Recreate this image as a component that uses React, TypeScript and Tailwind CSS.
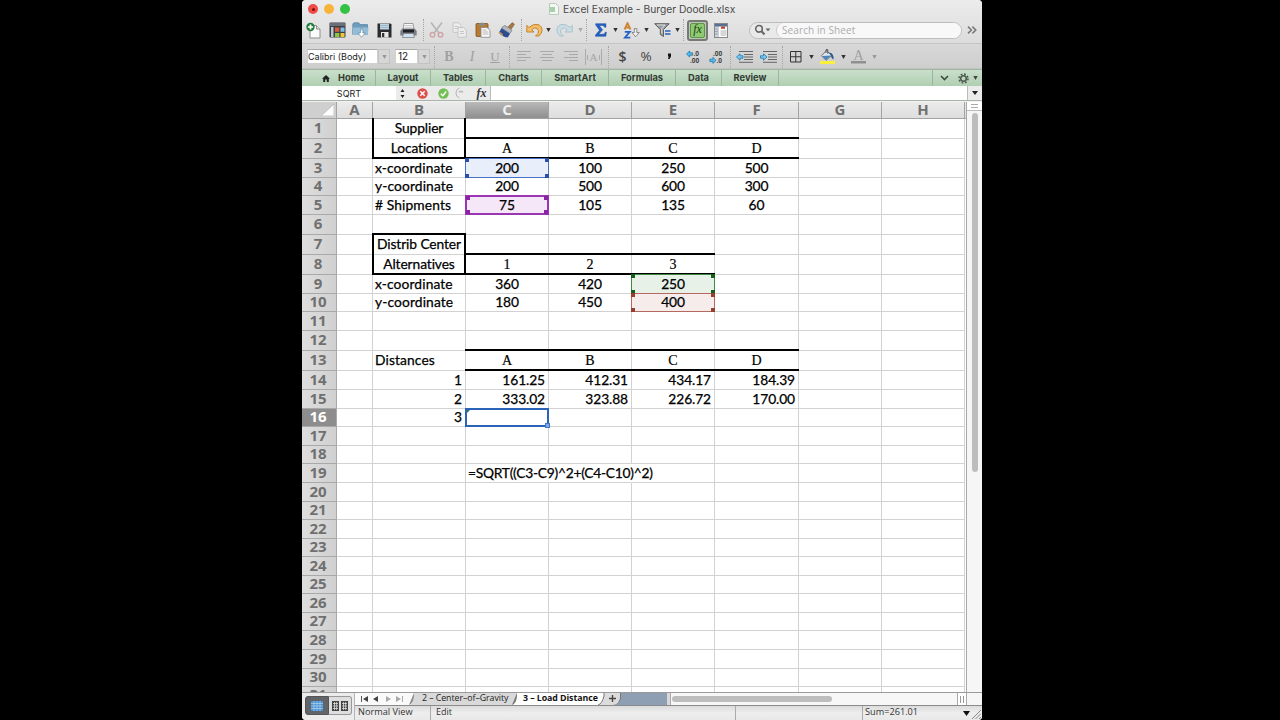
import type { ReactNode } from "react";

const ROWS = [20, 20, 19, 18, 19, 20, 20, 20, 19, 18, 19, 20, 20, 19, 19, 18, 19, 18, 19, 19, 18, 19, 18, 19, 18, 19, 18, 19, 19, 18, 6];
const COLS = ["A", "B", "C", "D", "E", "F", "G", "H"];
const COL_W = ["w-[36px]", "w-[93px]", "w-[83px]", "w-[83px]", "w-[83px]", "w-[84px]", "w-[83px]", "w-[83px]"];

const VALUES: Record<string, string> = {
  B1: "Supplier", B2: "Locations", C2: "A", D2: "B", E2: "C", F2: "D",
  B3: "x-coordinate", C3: "200", D3: "100", E3: "250", F3: "500",
  B4: "y-coordinate", C4: "200", D4: "500", E4: "600", F4: "300",
  B5: "# Shipments", C5: "75", D5: "105", E5: "135", F5: "60",
  B7: "Distrib Center", B8: "Alternatives", C8: "1", D8: "2", E8: "3",
  B9: "x-coordinate", C9: "360", D9: "420", E9: "250",
  B10: "y-coordinate", C10: "180", D10: "450", E10: "400",
  B13: "Distances", C13: "A", D13: "B", E13: "C", F13: "D",
  B14: "1", C14: "161.25", D14: "412.31", E14: "434.17", F14: "184.39",
  B15: "2", C15: "333.02", D15: "323.88", E15: "226.72", F15: "170.00",
  B16: "3", C19: "=SQRT((C3-C9)^2+(C4-C10)^2)",
};

const LINED = new Set(
  "B2 C1 D1 E1 F1 C2 D2 E2 F2 B6 B8 C7 D7 E7 C8 D8 E8 C12 D12 E12 F12 C13 D13 E13 F13".split(" "),
);
const BOXED = new Set(["B1", "B2", "B7", "B8"]);

const MARKS: Record<string, { box: string; dot: string }> = {
  C3: { box: "border-[#4a72c4] bg-[#e8effa]", dot: "bg-[#2b4fae]" },
  C5: { box: "border-2 border-[#9a35b4] bg-[#f5e6f8]", dot: "bg-[#8a22a8]" },
  E9: { box: "border-[#3f8a43] bg-[#e7f1e8]", dot: "bg-[#155f1c]" },
  E10: { box: "border-[#b5695c] bg-[#f5eceb]", dot: "bg-[#963f30]" },
};

function Cell({ col, row }: { col: number; row: number }) {
  const id = COLS[col] + row;
  const text = VALUES[id];
  const mark = MARKS[id];
  const serif = (row === 2 || row === 8 || row === 13) && col > 1;
  const left = (col === 1 && [3, 4, 5, 9, 10, 13].includes(row)) || row === 19;
  const right = row >= 14 && row <= 16;
  const spill = row === 19 && (col === 2 || col === 3);
  return (
    <div
      className={`relative flex h-full shrink-0 items-center whitespace-nowrap border-b border-r border-b-[#d2d2d2] font-normal ${spill ? "border-r-transparent" : "border-r-[#d2d2d2]"} ${COL_W[col]} ${left ? "justify-start pl-[2px]" : right ? "justify-end pr-[3px]" : "justify-center"}`}
    >
      {mark && (
        <div className={`absolute -left-px -right-px -top-px bottom-[-1px] border ${mark.box}`}>
          <i className={`absolute -left-[1px] -top-[1px] size-1 ${mark.dot}`} />
          <i className={`absolute -right-[1px] -top-[1px] size-1 ${mark.dot}`} />
          <i className={`absolute -bottom-[1px] -left-[1px] size-1 ${mark.dot}`} />
          <i className={`absolute -bottom-[1px] -right-[1px] size-1 ${mark.dot}`} />
        </div>
      )}
      {LINED.has(id) && <i className="absolute -bottom-px -left-px -right-px h-[2px] bg-black" />}
      {BOXED.has(id) && <i className="absolute -bottom-px -left-px -top-px w-[2px] bg-black" />}
      {BOXED.has(id) && <i className="absolute -bottom-px -right-px -top-px w-[2px] bg-black" />}
      {id === "C16" && (
        <div className="absolute -bottom-px -left-px -right-px -top-px z-10 border-2 border-[#2a63b8] bg-white">
          <svg className="absolute left-0 top-0" width="3" height="3"><path d="M0 0h3L0 3z" fill="#2e7a62" /></svg>
          <i className="absolute -bottom-[3px] -right-[3px] size-[5px] border border-[#3f77c9] bg-[#7ea9e6]" />
        </div>
      )}
      {text && (
        <span
          className={
            serif
              ? "relative font-['Liberation_Serif',serif] text-[14px] leading-[17px] text-black [-webkit-text-stroke:0.2px_black]"
              : row === 19
                ? "relative -top-px font-['Lato',sans-serif] text-[13.8px] leading-[17px] tracking-[-0.26px] text-black [-webkit-text-stroke:0.25px_black]"
                : left
                  ? "relative -top-px font-['Lato',sans-serif] text-[13.8px] leading-[17px] tracking-[0.12px] text-black [-webkit-text-stroke:0.25px_black]"
                  : "relative -top-px font-['Lato',sans-serif] text-[13.8px] leading-[17px] tracking-[-0.1px] text-black [-webkit-text-stroke:0.25px_black]"
          }
        >
          {text}
        </span>
      )}
    </div>
  );
}

function S({ w, children }: { w: string; children?: ReactNode }) {
  return <div className={`flex h-full shrink-0 items-center justify-center ${w}`}>{children}</div>;
}
function Sep({ w }: { w: string }) {
  return <S w={w}><i className="h-[22px] border-l border-dotted border-[#a5a5a5]" /></S>;
}
function Arr({ w, c = "fill-[#333]" }: { w: string; c?: string }) {
  return <S w={w}><svg width="5" height="4" className={c}><path d="M0.3 0h4.4L2.5 4z" /></svg></S>;
}
function Lines({ kind }: { kind: "l" | "c" | "r" }) {
  const x = kind === "l" ? 0 : kind === "c" ? 2 : 5;
  return (
    <svg width="14" height="12" className="stroke-[#a9a9a9]" strokeWidth="1">
      <path d={`M0 .5h14M${x} 3.5h${kind === "c" ? 10 : 9}M0 6.5h14M${x} 9.5h${kind === "c" ? 10 : 9}`} />
    </svg>
  );
}
function Indent({ flip }: { flip?: boolean }) {
  return (
    <svg width="17" height="12">
      <path d="M3 .5h14M8 3.500h9M8 6h9M8 8.500h9M3 11.300h14" stroke="#666" fill="none" />
      <path d={flip ? "M7 6L3.500 2.800v2H.5v2.400h3v2z" : "M.5 6L4 2.800v2h3v2.400H4v2z"} fill="#7cc8f0" stroke="#1879b4" strokeWidth=".8" />
    </svg>
  );
}
function Decimals({ inc }: { inc?: boolean }) {
  return (
    <svg width="15" height="14" className="font-['Open_Sans',sans-serif] text-[6.500px] font-bold" fill="#444">
      <text x={inc ? 7.500 : 4} y="6">{inc ? ".0" : ".00"}</text>
      <text x={inc ? 4 : 7.500} y="13">{inc ? ".00" : ".0"}</text>
      {inc ? (
        <path d="M.5 4L3.600 1v1.800h3v2.400h-3V7z" fill="#5dbbea" stroke="#1879b4" strokeWidth=".8" />
      ) : (
        <path d="M7 10.400L3.900 7.400v1.800h-3v2.400h3v1.800z" fill="#5dbbea" stroke="#1879b4" strokeWidth=".8" />
      )}
    </svg>
  );
}

function Toolbar() {
  return (
    <div className="flex h-[25px] shrink-0 items-center pb-px">
      <S w="w-[24px]">
        <svg width="16" height="17">
          <path d="M4 3.500h6.500l3.500 3.600V16H4z" fill="#fbfbfb" stroke="#8f8f8f" />
          <path d="M10.500 3.500v3.600h3.500" fill="#ddd" stroke="#8f8f8f" />
          <circle cx="4.500" cy="5" r="4.200" fill="#1e7a34" />
          <path d="M4.500 2.400v5.200M1.900 5h5.200" stroke="#fff" strokeWidth="1.700" />
        </svg>
      </S>
      <S w="w-[23px]">
        <svg width="17" height="16">
          <rect x=".5" y=".5" width="16" height="15" rx="1" fill="#3b3f45" />
          <rect x="1" y="1" width="15" height="3" fill="#6a7079" />
          <path d="M2 5h2.500v10H2z" fill="#b9c6d4" />
          <rect x="6" y="5.500" width="4.300" height="4.300" fill="#db5b35" /><rect x="11.500" y="5.500" width="4" height="4.300" fill="#7fbde8" />
          <rect x="6" y="11" width="4.300" height="4" fill="#8cc63f" /><rect x="11.500" y="11" width="4" height="4" fill="#f0c33c" />
        </svg>
      </S>
      <S w="w-[23px]">
        <svg width="17" height="16">
          <path d="M.8 12.500V2l1-1.200h5l1.200 1.800h7.500v10z" fill="#6d9cbd" stroke="#4f7f9f" strokeWidth=".7" />
          <path d="M1 5.500h15.500l-.6 7.500H1z" fill="#94bcd6" />
          <path d="M8.800 6.500c2.200.5 2.300 2.500 2 4.500h2.400l-3.700 4.300L6 11h2.300c.4-2 .8-3 .5-4.500z" fill="#fff" stroke="#5b7f96" strokeWidth=".6" />
        </svg>
      </S>
      <S w="w-[24px]">
        <svg width="15" height="15">
          <path d="M.5.5h13l1 1v13H.5z" fill="#2a2c30" />
          <path d="M3 .8h9v5.700H3z" fill="#c2d5e4" /><path d="M3 2.500h9M3 4.500h9" stroke="#8fa9bd" strokeWidth=".7" />
          <path d="M4 9h7.500v5.500H4z" fill="#e7e7e7" /><path d="M5 10h2.300v4H5z" fill="#333" />
        </svg>
      </S>
      <S w="w-[24px]">
        <svg width="17" height="15">
          <path d="M4 .5h9l1 6H3z" fill="#fafafa" stroke="#888" strokeWidth=".8" /><path d="M4.500 2.500h8M4.500 4.300h8" stroke="#aaa" strokeWidth=".6" />
          <path d="M2.300 5.500h12.400l2 2.500v4.500H.3V8z" fill="#7b7f84" /><path d="M3 6.500h11v3H3z" fill="#1e2226" />
          <path d="M3.500 10.500h10l1 4H2.500z" fill="#cfe2ef" stroke="#777" strokeWidth=".7" />
        </svg>
      </S>
      <Sep w="w-[6px]" />
      <S w="w-[21px]">
        <svg width="15" height="16" fill="none" stroke="#b4b4b4" strokeWidth="1.500">
          <path d="M2 .5l7.500 10M13 .5L5.500 10.500" />
          <circle cx="3.500" cy="12.700" r="2.300" stroke="#cfa5a8" /><circle cx="11.500" cy="12.700" r="2.300" stroke="#cfa5a8" />
        </svg>
      </S>
      <S w="w-[24px]">
        <svg width="15" height="16" fill="#ededed" stroke="#c2c2c2" strokeWidth=".9">
          <path d="M1 .8h5.500l2.500 2.500v7H1z" /><path d="M6 5.500h5.500L14.300 8v7.200H6z" /><path d="M2.500 4.500h4M2.500 6.500h4M8 9.500h4M8 11.500h4" />
        </svg>
      </S>
      <S w="w-[23px]">
        <svg width="16" height="16">
          <rect x="1" y="1.500" width="12" height="13" rx="1" fill="#b87a33" stroke="#7d501d" strokeWidth=".8" />
          <path d="M4 1.500h1.500q1.500-2 3 0H10v2.300H4z" fill="#888d92" />
          <path d="M6 5.500h6l3 2.800v7H6z" fill="#fafafa" stroke="#888" strokeWidth=".8" />
          <path d="M7.500 8h4M7.500 10h6M7.500 12h6" stroke="#999" strokeWidth=".7" />
        </svg>
      </S>
      <S w="w-[24px]">
        <svg width="17" height="16">
          <path d="M9.500 5.500L14 .8q2 0 2.300 1.800L12.500 8z" fill="#a87640" stroke="#6e4a22" strokeWidth=".5" />
          <path d="M6.500 3.500q4.500 1.500 7.500 5l-2.200 3L3.500 6z" fill="#b4b9c0" stroke="#666" strokeWidth=".6" />
          <path d="M3.500 6.200l8.500 5.500-2.300 3.800Q4 15 .8 10.800z" fill="#2b4b94" /><path d="M.8 10.600q2.800 0 3.800 3.200" fill="none" stroke="#d8a14c" strokeWidth="1.200" />
        </svg>
      </S>
      <Sep w="w-[6px]" />
      <S w="w-[20px]">
        <svg width="17" height="14"><path d="M.8 2.300L2.900 4.500Q7.500.2 12 1.600q4.300 1.600 4 6-.3 3-3 5.400h-3.500q3.500-2.400 3-5.200-.6-3.300-4-2.800-1.500.3-2.700 1.800L8 9H.8z" fill="#f4bd68" stroke="#c07a22" strokeWidth=".9" /></svg>
      </S>
      <Arr w="w-[8px]" />
      <S w="w-[25px]">
        <svg width="17" height="14"><path d="M16.200 2.300l-2.100 2.200Q9.500.2 5 1.600.7 3.200 1 7.600q.3 3 3 5.400h3.500Q4 10.600 4.500 7.800q.6-3.300 4-2.800 1.500.3 2.700 1.800L9 9h7.200z" fill="#cbdde5" stroke="#a5bfcb" strokeWidth=".9" /></svg>
      </S>
      <Arr w="w-[6px]" c="fill-[#aaa]" />
      <Sep w="w-[7px]" />
      <S w="w-[22px]">
        <svg width="12" height="14"><path d="M.7.7h10.200v3.500H9.500Q9.300 2.500 7.700 2.500H4.200L7.600 6.800 3.700 11.300h4.500q1.600 0 2-2h1.200L10.800 13.300H.5v-1.200L4.500 7.300.7 2z" fill="#2460c5" stroke="#17499c" strokeWidth=".5" /></svg>
      </S>
      <Arr w="w-[7px]" />
      <S w="w-[24px]">
        <svg width="17" height="17" fill="none" strokeWidth="1.800">
          <path d="M1.500 7.500L4.500 1l3 6.500M2.700 5.500h3.700" stroke="#cf8433" />
          <path d="M1.800 9.800h5L1.800 15.700h5.500" stroke="#2460c5" />
          <path d="M11.300 6.500h2.500v4h2.500l-3.700 4.300L9 10.500h2.300z" fill="#eee" stroke="#777" strokeWidth=".8" />
        </svg>
      </S>
      <Arr w="w-[7px]" />
      <S w="w-[24px]">
        <svg width="17" height="15">
          <path d="M.7.700h14.500L9.500 6.500v7L6.300 11.500v-5z" fill="#9a9da0" stroke="#555" strokeWidth=".9" /><path d="M3 2h8L7.800 5.500v5" fill="none" stroke="#e0e0e0" />
          <path d="M11 8h5.500M11 11h5.500" stroke="#2563c4" strokeWidth="1.600" />
        </svg>
      </S>
      <Arr w="w-[6px]" />
      <Sep w="w-[7px]" />
      <div className="flex h-[21px] w-[21px] shrink-0 items-center justify-center rounded-[3px] border-2 border-[#757a73] bg-[#bcc5b8]">
        <div className="flex size-[15px] items-center justify-center rounded-[2px] border border-[#5c9548] bg-[#8fca72] pb-[2px] font-['Liberation_Serif',serif] text-[12px] italic leading-[14px] text-[#173d10]">fx</div>
      </div>
      <S w="w-[26px]">
        <svg width="14" height="15">
          <rect x=".5" y=".5" width="13" height="14" fill="#fff" stroke="#888" /><path d="M1 1h4v13H1z" fill="#c9d1da" /><path d="M1 1h12v2.500H1z" fill="#5b6f93" />
          <path d="M7 3.500h4v2.300H7z" fill="#c8442f" /><path d="M6.500 8h6M6.500 10h6M6.500 12h6M1 6h3M1 8.500h3M1 11h3" stroke="#999" strokeWidth=".8" />
        </svg>
      </S>
      <div className="ml-[15px] flex h-[17px] w-[213px] shrink-0 rounded-full border border-[#bdbdbd] bg-[#e9e9e9]">
        <div className="flex w-[26px] items-center pl-[4px]">
          <svg width="17" height="12"><circle cx="5" cy="4.800" r="3.300" fill="none" stroke="#666" strokeWidth="1.600" /><path d="M7.500 7.300l3 3.200" stroke="#666" strokeWidth="2" /><path d="M11.500 4.500h5L14 7.300z" fill="#666" /></svg>
        </div>
        <div className="flex flex-1 items-center rounded-full border-l border-[#c9c9c9] bg-[#f8f8f8] pl-[5px] font-['Open_Sans',sans-serif] text-[10px] leading-[15px] tracking-[0.1px] text-[#acacac]">Search in Sheet</div>
      </div>
      <S w="w-[20px]"><svg width="10" height="8" fill="none" stroke="#777" strokeWidth="1.500"><path d="M1 .6l3.400 3.400L1 7.400M5.400 .6l3.400 3.400-3.400 3.400" /></svg></S>
    </div>
  );
}

function FormatBar() {
  return (
    <div className="flex h-[25px] shrink-0 items-center border-t border-[#c4c4c4] bg-gradient-to-b from-[#d8d8d8] to-[#cecece] pl-[5px] pt-px font-['Open_Sans',sans-serif] text-[#444]">
      <div className="flex h-[15px] w-[71px] shrink-0 items-center border border-[#d0d0d0] border-t-[#aaa] bg-white font-['Inter',sans-serif] text-[9px] leading-[13px] text-[#222]">Calibri (Body)</div>
      <div className="flex h-[15px] w-[12px] shrink-0 border border-[#c3c3c3] bg-[#d6d6d6]"><Arr w="w-[10px]" c="fill-[#999]" /></div>
      <div className="ml-[5px] flex h-[15px] w-[23px] shrink-0 items-center border border-[#d0d0d0] border-t-[#aaa] bg-white pl-[2px] font-['Inter',sans-serif] text-[10px] leading-[13px] text-[#222]">12</div>
      <div className="flex h-[15px] w-[12px] shrink-0 border border-[#c3c3c3] bg-[#d6d6d6]"><Arr w="w-[10px]" c="fill-[#999]" /></div>
      <Sep w="w-[8px]" />
      <S w="w-[22px]"><b className="font-['Liberation_Serif',serif] text-[14px] leading-[16px] text-[#a0a0a0]">B</b></S>
      <S w="w-[24px]"><i className="font-['Liberation_Serif',serif] text-[14px] leading-[16px] text-[#a0a0a0]">I</i></S>
      <S w="w-[22px]"><u className="font-['Liberation_Serif',serif] text-[13px] leading-[16px] text-[#a0a0a0]">U</u></S>
      <Sep w="w-[6px]" />
      <S w="w-[23px]"><Lines kind="l" /></S>
      <S w="w-[24px]"><Lines kind="c" /></S>
      <S w="w-[23px]"><Lines kind="r" /></S>
      <S w="w-[23px]">
        <svg width="17" height="16" className="font-['Liberation_Serif',serif] text-[11px]" fill="#a6a6a6"><path d="M.5 0v16M16.500 0v16M2.500 6v5M14.500 6v5" stroke="#ababab" /><text x="4.500" y="12">A</text></svg>
      </S>
      <Sep w="w-[6px]" />
      <S w="w-[23px]"><span className="text-[14px] font-semibold leading-[19px]">$</span></S>
      <S w="w-[24px]"><span className="text-[13.500px] leading-[19px]">%</span></S>
      <S w="w-[23px]"><svg width="5" height="7"><path d="M1 .5h3v3L2.500 6H1l.8-2.500H1z" fill="#111" /></svg></S>
      <S w="w-[24px]"><Decimals inc /></S>
      <S w="w-[23px]"><Decimals /></S>
      <Sep w="w-[5px]" />
      <S w="w-[23px]"><Indent /></S>
      <S w="w-[24px]"><Indent flip /></S>
      <Sep w="w-[4px]" />
      <S w="w-[24px]"><svg width="12" height="12" fill="none" stroke="#333"><path d="M.5.5h10.500v10.500H.5zM5.750.5v10.500M.5 5.750h10.500" /></svg></S>
      <Arr w="w-[6px]" />
      <S w="w-[26px]">
        <svg width="15" height="15">
          <path d="M0 12h15v3H0z" fill="#faf03c" /><path d="M6.500 1.500l5 5-5.500 4.800L1.500 6.800z" fill="#dfe8ef" stroke="#555" strokeWidth=".8" />
          <path d="M2 7l9-.5-5 4.700z" fill="#4f86b8" /><path d="M9 3.500q5 .3 4.500 7Q11 9.500 10.800 6z" fill="#28588c" /><path d="M6 4V.8q1-1 1.800 0v4" fill="none" stroke="#555" />
        </svg>
      </S>
      <Arr w="w-[6px]" />
      <S w="w-[25px]"><svg width="15" height="15" className="font-['Liberation_Serif',serif] text-[14px]" fill="#a0a0a0"><text x="2.500" y="10.500">A</text><path d="M0 12h15v2.500H0z" fill="#8f8f8f" /></svg></S>
      <Arr w="w-[6px]" c="fill-[#999]" />
    </div>
  );
}

const TABS: [string, string][] = [
  ["Layout", "w-[55px]"], ["Tables", "w-[55px]"], ["Charts", "w-[56px]"], ["SmartArt", "w-[67px]"],
  ["Formulas", "w-[67px]"], ["Data", "w-[46px]"], ["Review", "w-[57px]"],
];

function Ribbon() {
  return (
    <div className="flex h-[17px] shrink-0 border-t border-[#a3b5a4] bg-gradient-to-b from-[#c9dfca] to-[#b0cfb2] font-['Inter',sans-serif] text-[9.300px] font-bold leading-[14px] text-[#333a34]">
      <div className="flex w-[74px] shrink-0 items-center border-r border-[#9db59f] pl-[20px]">
        <svg width="8" height="7" className="mr-[8px]"><path d="M4 0L0 3.800h1.200V7h2V4.500h1.600V7h2V3.800H8z" fill="#222" /></svg>
        Home
      </div>
      {TABS.map(([name, w]) => (
        <div key={name} className={`flex shrink-0 items-center justify-center border-r border-[#9db59f] ${w}`}>{name}</div>
      ))}
      <div className="flex flex-1 items-center justify-end">
        <div className="h-full border-l border-[#9db59f]" />
        <S w="w-[22px]"><svg width="9" height="6"><path d="M1 1l3.500 3.500L8 1" fill="none" stroke="#3e4a3f" strokeWidth="1.600" /></svg></S>
        <S w="w-[17px]">
          <svg width="11" height="11" fill="none" stroke="#4c584d"><circle cx="5.500" cy="5.500" r="2.800" strokeWidth="1.500" /><circle cx="5.500" cy="5.500" r="4.500" strokeWidth="1.500" strokeDasharray="1.770 1.770" /></svg>
        </S>
        <Arr w="w-[7px]" c="fill-[#444]" />
        <i className="w-[3px]" />
      </div>
    </div>
  );
}

function FormulaBar() {
  return (
    <div className="flex h-[14px] shrink-0 bg-[#ebebeb]">
      <div className="flex w-[94px] shrink-0 items-center justify-center bg-white font-['Inter',sans-serif] text-[9px] leading-[13px] text-[#222]">SQRT</div>
      <S w="w-[12px]"><svg width="5" height="9" fill="#222"><path d="M2.500 0l2 3H.5zM2.500 9l2-3H.5z" /></svg></S>
      <S w="w-[29px]"><svg width="11" height="11"><circle cx="5.500" cy="5.500" r="5.200" fill="#dd4f4a" /><path d="M3.300 3.300l4.400 4.400M7.700 3.300L3.300 7.700" stroke="#fff" strokeWidth="1.500" /></svg></S>
      <S w="w-[12px]"><svg width="11" height="11"><circle cx="5.500" cy="5.500" r="5.200" fill="#74bf55" /><path d="M2.800 5.700l2 2L8.200 3.600" fill="none" stroke="#fff" strokeWidth="1.500" /></svg></S>
      <S w="w-[24px]"><svg width="12" height="12"><path d="M4.500 11A5.300 5.300 0 014.500 1" fill="none" stroke="#b5b5b5" /><path d="M3.500 5.500a2.500 2 0 015 0z" fill="#bbb" /></svg></S>
      <S w="w-[17px]"><i className="font-['Liberation_Serif',serif] text-[12px] font-bold leading-[14px] text-[#333]">fx</i></S>
      <div className="flex-1 border-x border-[#bbb] bg-white" />
      <S w="w-[14px]"><svg width="6" height="4"><path d="M0 0h6L3 4z" fill="#222" /></svg></S>
    </div>
  );
}

function Sheet() {
  return (
    <div className="flex h-[590px] shrink-0 bg-white">
      <div className="flex h-full w-[665px] shrink-0 flex-col overflow-hidden border-r border-[#a8a8a8] font-['Open_Sans',sans-serif] text-[15px] font-bold text-[#707070]">
        <div className="flex h-[17px] shrink-0 border-b border-[#a3a3a3] bg-gradient-to-b from-[#ebebeb] to-[#dedede]">
          <div className="flex w-[35px] shrink-0 items-end justify-end border-r border-[#a3a3a3] bg-[#cfcfcf] pb-[2px] pr-[2px]">
            <svg width="13" height="12"><path d="M13 0v12H0z" fill="#fcfcfc" stroke="#aaa" strokeWidth=".6" /></svg>
          </div>
          {COLS.map((c, i) => (
            <div key={c} className={`flex h-full shrink-0 items-center justify-center border-r border-[#a3a3a3] pb-[2px] leading-[14px] ${COL_W[i]} ${c === "C" ? "bg-gradient-to-b from-[#b9b9b9] to-[#8f8f8f] text-[#efefef]" : ""}`}>{c}</div>
          ))}
        </div>
        {ROWS.map((h, i) => (
          <div key={i} className="flex shrink-0" style={{ height: h }}>
            <div className={`flex w-[35px] shrink-0 justify-center border-b border-r border-[#a9a9a9] pb-[2px] pr-[2px] leading-[15px] ${i === 15 ? "bg-[#8d8d8d] text-white" : "bg-gradient-to-r from-[#dedede] to-[#d0d0d0]"} ${i === 30 ? "items-start" : "items-center"}`}>{i + 1}</div>
            {COLS.map((c, j) => <Cell key={c} col={j} row={i + 1} />)}
          </div>
        ))}
      </div>
      <div className="flex flex-1 flex-col items-center bg-[#f6f6f6]">
        <div className="flex h-[9px] w-full flex-col items-center justify-center gap-[2px] border-b border-[#bbb] bg-white"><i className="h-px w-[7px] bg-[#aaa]" /><i className="h-px w-[7px] bg-[#aaa]" /></div>
        <div className="mt-[2px] h-[359px] w-[6px] rounded-full bg-[#bdbdbd]" />
      </div>
    </div>
  );
}

function Footer() {
  return (
    <div className="flex h-[28px] shrink-0 border-t border-[#9a9a9a] bg-[#ececec] font-['Open_Sans',sans-serif] text-[9.500px] text-[#333]">
      <div className="flex w-[53px] shrink-0 items-center border-r border-[#b5b5b5] pb-[2px] pl-[3px]">
        <div className="flex h-[19px] w-[24px] items-center justify-center rounded-l-[3px] border border-[#555] bg-[#616468]">
          <svg width="12" height="10"><path d="M0 0h12v10H0z" fill="#4a90cf" /><path d="M0 2.500h12M0 5h12M0 7.500h12M3 0v10M6 0v10M9 0v10" stroke="#bde0fa" strokeWidth=".6" /></svg>
        </div>
        <div className="flex h-[19px] w-[23px] items-center justify-center gap-[2px] rounded-r-[3px] border border-l-0 border-[#999] bg-[#dedede]">
          <svg width="16" height="10"><path d="M0 0h7v10H0zM9 0h7v10H9z" fill="#444" /><path d="M1 2.500h5M1 5h5M1 7.500h5M2.500 1v8M4.700 1v8M10 2.500h5M10 5h5M10 7.500h5M11.500 1v8M13.700 1v8" stroke="#ddd" strokeWidth=".8" /></svg>
        </div>
      </div>
      <div className="flex flex-1 flex-col">
        <div className="flex h-[13px] shrink-0 border-b border-[#8b8b8b]">
          <div className="flex w-[54px] shrink-0 items-center bg-[#fafafa] pb-px pl-[6px]">
            <svg width="42" height="6"><path d="M.5 0v6" stroke="#555" /><path d="M41.500 0v6" stroke="#aaa" /><path d="M7 0v6L2 3zM17 0v6l-5-3z" fill="#444" /><path d="M25 0v6l5-3zM35 0v6l5-3z" fill="#aaa" /></svg>
          </div>
          <svg width="8" height="12" className="shrink-0 bg-[#d9d9d9]"><path d="M0 0h5v3Q4 12 0 12z" fill="#fafafa" /><path d="M5 0v3Q4 11 0 12z" fill="#888" /></svg>
          <div className="flex w-[95px] shrink-0 items-center whitespace-nowrap bg-[#d9d9d9] pb-[2px] pl-[5px] text-[8.800px] font-medium leading-[11px] tracking-[-0.060px] text-[#222]">2 – Center–of–Gravity</div>
          <svg width="6" height="12" className="shrink-0 bg-white"><path d="M0 0h5v3Q4 12 0 12z" fill="#d9d9d9" /><path d="M5 0v3Q4 11 0 12z" fill="#777" /></svg>
          <div className="flex w-[80px] shrink-0 items-center whitespace-nowrap bg-white pb-[2px] pl-[5px] text-[8.800px] font-bold leading-[11px] tracking-[-0.060px] text-[#111]">3 – Load Distance</div>
          <svg width="7" height="12" className="shrink-0 bg-[#dcdcdc]"><path d="M0 0h6v3Q4 12 0 12z" fill="#fff" /><path d="M6 0v3Q4 11 0 12" fill="none" stroke="#777" /></svg>
          <div className="flex w-[16px] shrink-0 bg-[#8e9fb4]"><div className="flex w-[16px] items-center justify-center rounded-br-[8px] border-r border-[#777] bg-[#dcdcdc] pb-px"><svg width="7" height="7"><path d="M3.500 0v7M0 3.500h7" stroke="#444" strokeWidth="1.400" /></svg></div></div>
          <div className="w-[46px] shrink-0 bg-[#8e9fb4]" />
          <div className="w-[4px] shrink-0 border-r border-[#aaa] bg-[#d8d8d8]" />
          <div className="flex w-[286px] shrink-0 items-center bg-[#f7f7f7] pl-[1px]"><div className="h-[6px] w-[160px] rounded-full bg-[#bdbdbd]" /></div>
          <div className="flex w-[10px] shrink-0 items-center justify-center gap-[2px] border-x border-[#aaa] bg-white"><i className="h-[7px] w-px bg-[#999]" /><i className="h-[7px] w-px bg-[#999]" /></div>
          <div className="flex-1 bg-[#f6f6f6]" />
        </div>
        <div className="flex flex-1 items-center bg-gradient-to-b from-[#dcdcdc] via-[#eee] to-[#e8e8e8] leading-[12px]">
          <div className="w-[75px] shrink-0 pb-[2px] pl-[3px] text-[9.200px]">Normal View</div>
          <div className="flex h-full w-[305px] shrink-0 items-center border-l border-[#aaa] pb-[2px] pl-[5px] text-[9px]">Edit</div>
          <div className="h-full w-[127px] shrink-0 border-l border-[#aaa]" />
          <div className="flex h-full flex-1 items-center border-l border-[#aaa] pl-[2px]">
            <span className="w-[98px] pb-[2px] text-[9.200px]">Sum=261.01</span>
            <svg width="7" height="5"><path d="M0 0h7L3.500 5z" fill="#111" /></svg>
            <svg width="9" height="9" className="ml-[2px] mt-[3px]"><path d="M0 9l9-9M3.500 9L9 3.500M7 9l2-2" stroke="#888" /></svg>
          </div>
        </div>
      </div>
    </div>
  );
}

export default function App() {
  return (
    <div className="flex h-[720px] w-[1280px] overflow-hidden bg-black pl-[302px]">
      <div className="flex h-[720px] w-[680px] shrink-0 flex-col overflow-hidden rounded-[4px] bg-[#e9e9e9]">
        <div className="flex h-[43px] shrink-0 flex-col bg-gradient-to-b from-[#ececec] to-[#dcdcdc]">
          <div className="flex h-[18px] shrink-0 items-center">
            <div className="flex w-[247px] gap-[6px] pl-[6px]">
              <div className="flex size-[10px] items-center justify-center rounded-full bg-[#ee4d47]"><i className="size-[3px] rounded-full bg-[#7d0f0d]" /></div>
              <div className="size-[10px] rounded-full bg-[#f8b43a]" />
              <div className="size-[10px] rounded-full bg-[#34c244]" />
            </div>
            <div className="flex items-center gap-[4px] font-['Inter',sans-serif] text-[10.250px] leading-[14px] text-[#4a4a4a]">
              <svg width="10" height="12"><path d="M.5.5h6l3 3v8h-9z" fill="#f3f8f3" stroke="#b9c9ba" /><path d="M1 4h5v5H1z" fill="#a8d0ab" /></svg>
              <span className="whitespace-nowrap">Excel Example - Burger Doodle.xlsx</span>
            </div>
          </div>
          <Toolbar />
        </div>
        <FormatBar />
        <div className="h-px shrink-0 bg-[#bcc5bc]" />
        <Ribbon />
        <FormulaBar />
        <div className="h-[2px] shrink-0 border-t border-[#aab3aa] bg-[#f2f2f2]" />
        <Sheet />
        <Footer />
      </div>
    </div>
  );
}
